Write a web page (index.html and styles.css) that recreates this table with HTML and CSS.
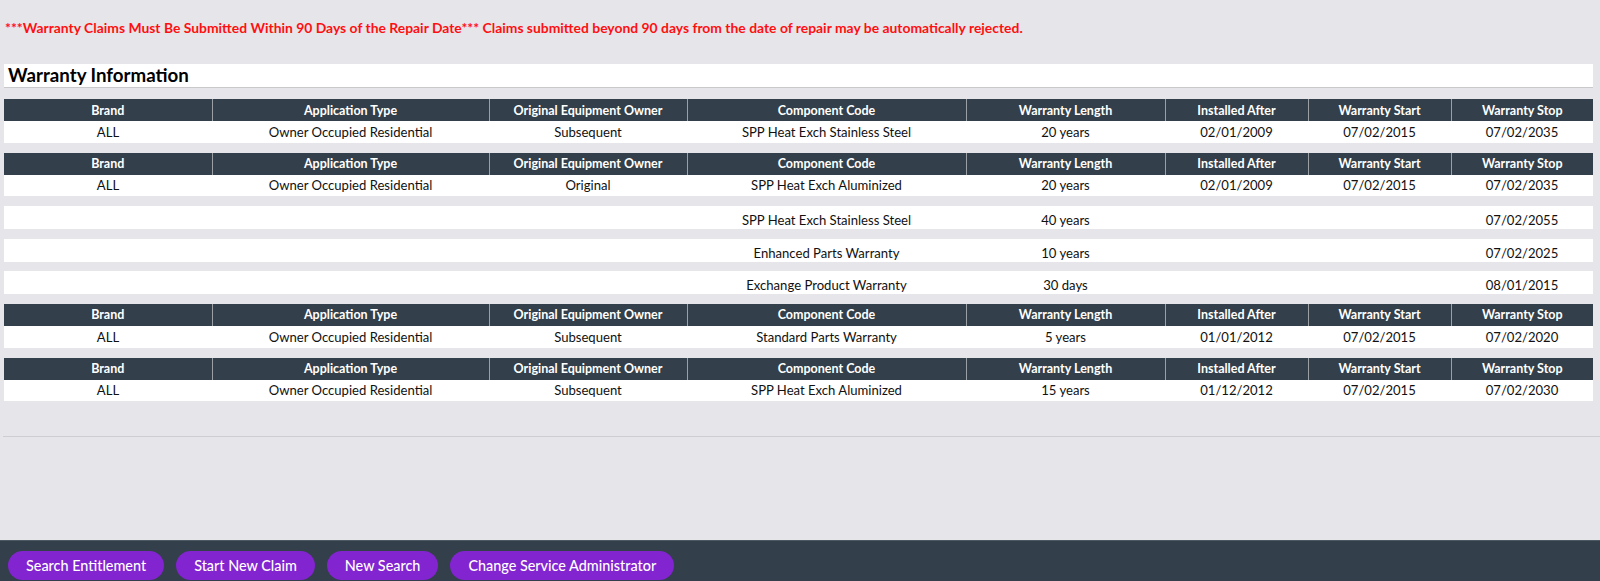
FILE: index.html
```html
<!DOCTYPE html>
<html lang="en">
<head>
<meta charset="utf-8">
<title>Warranty Information</title>
<link rel="stylesheet" href="styles.css">
</head>
<body>
<main class="page">
  <p class="notice">***Warranty Claims Must Be Submitted Within 90 Days of the Repair Date*** Claims submitted beyond 90 days from the date of repair may be automatically rejected.</p>

  <section class="warranty">
    <h2 class="section-title">Warranty Information</h2>

    <table class="wtable">
      <colgroup><col class="c1"><col class="c2"><col class="c3"><col class="c4"><col class="c5"><col class="c6"><col class="c7"><col class="c8"></colgroup>
      <thead><tr><th>Brand</th><th>Application Type</th><th>Original Equipment Owner</th><th>Component Code</th><th>Warranty Length</th><th>Installed After</th><th>Warranty Start</th><th>Warranty Stop</th></tr></thead>
      <tbody><tr><td>ALL</td><td>Owner Occupied Residential</td><td>Subsequent</td><td>SPP Heat Exch Stainless Steel</td><td>20 years</td><td>02/01/2009</td><td>07/02/2015</td><td>07/02/2035</td></tr></tbody>
    </table>

    <table class="wtable">
      <colgroup><col class="c1"><col class="c2"><col class="c3"><col class="c4"><col class="c5"><col class="c6"><col class="c7"><col class="c8"></colgroup>
      <thead><tr><th>Brand</th><th>Application Type</th><th>Original Equipment Owner</th><th>Component Code</th><th>Warranty Length</th><th>Installed After</th><th>Warranty Start</th><th>Warranty Stop</th></tr></thead>
      <tbody><tr><td>ALL</td><td>Owner Occupied Residential</td><td>Original</td><td>SPP Heat Exch Aluminized</td><td>20 years</td><td>02/01/2009</td><td>07/02/2015</td><td>07/02/2035</td></tr></tbody>
    </table>

    <table class="wtable">
      <colgroup><col class="c1"><col class="c2"><col class="c3"><col class="c4"><col class="c5"><col class="c6"><col class="c7"><col class="c8"></colgroup>
      <tbody><tr class="sub"><td></td><td></td><td></td><td>SPP Heat Exch Stainless Steel</td><td>40 years</td><td></td><td></td><td>07/02/2055</td></tr></tbody>
    </table>

    <table class="wtable">
      <colgroup><col class="c1"><col class="c2"><col class="c3"><col class="c4"><col class="c5"><col class="c6"><col class="c7"><col class="c8"></colgroup>
      <tbody><tr class="sub"><td></td><td></td><td></td><td>Enhanced Parts Warranty</td><td>10 years</td><td></td><td></td><td>07/02/2025</td></tr></tbody>
    </table>

    <table class="wtable">
      <colgroup><col class="c1"><col class="c2"><col class="c3"><col class="c4"><col class="c5"><col class="c6"><col class="c7"><col class="c8"></colgroup>
      <tbody><tr class="sub"><td></td><td></td><td></td><td>Exchange Product Warranty</td><td>30 days</td><td></td><td></td><td>08/01/2015</td></tr></tbody>
    </table>

    <table class="wtable">
      <colgroup><col class="c1"><col class="c2"><col class="c3"><col class="c4"><col class="c5"><col class="c6"><col class="c7"><col class="c8"></colgroup>
      <thead><tr><th>Brand</th><th>Application Type</th><th>Original Equipment Owner</th><th>Component Code</th><th>Warranty Length</th><th>Installed After</th><th>Warranty Start</th><th>Warranty Stop</th></tr></thead>
      <tbody><tr><td>ALL</td><td>Owner Occupied Residential</td><td>Subsequent</td><td>Standard Parts Warranty</td><td>5 years</td><td>01/01/2012</td><td>07/02/2015</td><td>07/02/2020</td></tr></tbody>
    </table>

    <table class="wtable">
      <colgroup><col class="c1"><col class="c2"><col class="c3"><col class="c4"><col class="c5"><col class="c6"><col class="c7"><col class="c8"></colgroup>
      <thead><tr><th>Brand</th><th>Application Type</th><th>Original Equipment Owner</th><th>Component Code</th><th>Warranty Length</th><th>Installed After</th><th>Warranty Start</th><th>Warranty Stop</th></tr></thead>
      <tbody><tr><td>ALL</td><td>Owner Occupied Residential</td><td>Subsequent</td><td>SPP Heat Exch Aluminized</td><td>15 years</td><td>01/12/2012</td><td>07/02/2015</td><td>07/02/2030</td></tr></tbody>
    </table>
  </section>

  <hr class="divider">
</main>

<footer class="actions">
  <button class="pill" type="button">Search Entitlement</button>
  <button class="pill" type="button">Start New Claim</button>
  <button class="pill" type="button">New Search</button>
  <button class="pill" type="button">Change Service Administrator</button>
</footer>
</body>
</html>
```
FILE: styles.css
```css
html, body {
  margin: 0;
  padding: 0;
}
body {
  background: #e6e5ea;
  font-family: Lato, "Open Sans", "Liberation Sans", sans-serif;
  color: #111;
}
.notice {
  margin: 0;
  padding: 19px 0 0 5px;
  color: #ff1010;
  font-size: 13.9px;
  font-weight: 700;
  line-height: 17px;
}
.warranty {
  margin: 28px 7px 0 4px;
}
.section-title {
  margin: 0 0 11px 0;
  background: #fff;
  border-bottom: 1px solid #c9c9cc;
  font-size: 18.7px;
  font-weight: 700;
  line-height: 23px;
  padding: 0 0 0 4px;
  color: #000;
}
.wtable {
  width: 100%;
  table-layout: fixed;
  border-collapse: collapse;
  margin-bottom: 9.8px;
  font-size: 13.1px;
}
.c1 { width: 208px; }
.c2 { width: 277px; }
.c3 { width: 198px; }
.c4 { width: 279px; }
.c5 { width: 199px; }
.c6 { width: 143px; }
.c7 { width: 143px; }
.c8 { width: 142px; }
.wtable th {
  background: #333f4a;
  color: #fff;
  font-weight: 700;
  font-size: 12.5px;
  height: 22px;
  padding: 0;
  text-align: center;
  vertical-align: middle;
}
.wtable th + th {
  border-left: 1px solid #9aa0a6;
}
.wtable td {
  background: #fff;
  height: 21.8px;
  padding: 0;
  text-align: center;
  vertical-align: middle;
  color: #111;
}
.wtable .sub td {
  vertical-align: bottom;
  padding-bottom: 1px;
}
.divider {
  margin: 35px 0 0 3px;
  border: 0;
  border-top: 1px solid #cfcdd4;
  height: 0;
}
.actions {
  margin-top: 103px;
  background: #333f4a;
  border-top: 1px solid #4d5862;
  padding: 10px 8px 10px 8px;
  display: flex;
  gap: 12px;
}
.pill {
  background: #8224d0;
  color: #fff;
  border: 0;
  border-radius: 15px;
  height: 29px;
  padding: 0 18px;
  font-family: Lato, "Liberation Sans", sans-serif;
  font-size: 14.4px;
  font-weight: 500;
}
```
